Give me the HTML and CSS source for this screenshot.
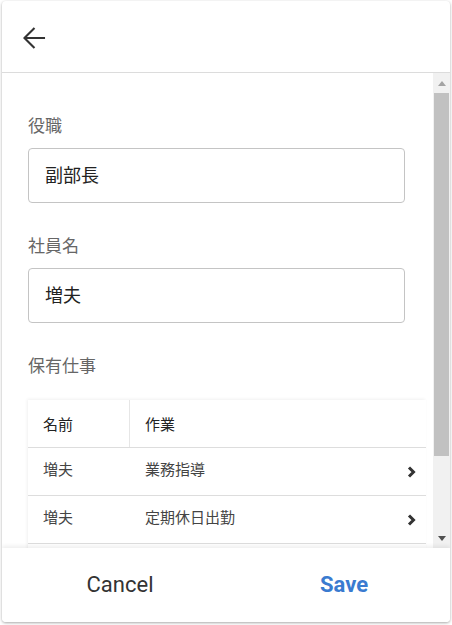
FILE: index.html
```html
<!DOCTYPE html>
<html lang="ja">
<head>
<meta charset="utf-8">
<link rel="stylesheet" href="styles.css">
</head>
<body>
<div class="card">
  <header class="top">
    <svg class="back" width="24" height="24" viewBox="0 0 24 24" aria-hidden="true">
      <path d="M1 11.5H23M12 1L1.5 11.5L12 22" fill="none" stroke="#333" stroke-width="2.2"/>
    </svg>
  </header>
  <div class="scroll">
    <div class="content">
      <div class="label">役職</div>
      <div class="input">副部長</div>
      <div class="label">社員名</div>
      <div class="input">増夫</div>
      <div class="label">保有仕事</div>
      <div class="table">
        <div class="row head">
          <div class="c1">名前</div>
          <div class="c2">作業</div>
        </div>
        <div class="row">
          <div class="c1">増夫</div>
          <div class="c2">業務指導</div>
          <svg class="chev" width="9" height="12" viewBox="0 0 9 12"><path d="M2 1.5L6.5 6L2 10.5" fill="none" stroke="#333" stroke-width="3"/></svg>
        </div>
        <div class="row">
          <div class="c1">増夫</div>
          <div class="c2">定期休日出勤</div>
          <svg class="chev" width="9" height="12" viewBox="0 0 9 12"><path d="M2 1.5L6.5 6L2 10.5" fill="none" stroke="#333" stroke-width="3"/></svg>
        </div>
        <div class="row"></div>
      </div>
    </div>
    <div class="sbar">
      <div class="arrow up"></div>
      <div class="thumb"></div>
      <div class="fill"></div>
      <div class="arrow down"></div>
    </div>
  </div>
  <footer class="foot">
    <div class="btn cancel">Cancel</div>
    <div class="btn save">Save</div>
  </footer>
</div>
</body>
</html>
```
FILE: styles.css
```css
html, body {
  margin: 0;
  padding: 0;
  background: #fff;
}
body {
  font-family: Roboto, "Noto Sans CJK JP", sans-serif;
  width: 452px;
  height: 625px;
  overflow: hidden;
}
.card {
  margin: 1px 2px 0 2px;
  height: 621px;
  background: #fff;
  border-radius: 4px;
  box-shadow: 0 1px 3px rgba(0,0,0,0.35);
  display: flex;
  flex-direction: column;
  overflow: hidden;
}
.top {
  flex: none;
  border-bottom: 1px solid #dcdcdc;
  display: flex;
  align-items: center;
  padding-left: 21px;
  box-sizing: border-box;
  height: 72px;
}
.back {
  width: 23px;
  height: 23px;
  margin-top: 4px;
}
.scroll {
  flex: 1;
  display: flex;
  min-height: 0;
  overflow: hidden;
}
.content {
  flex: 1;
  padding: 40px 7px 0 26px;
  overflow: hidden;
  font-family: "Noto Sans CJK JP", sans-serif;
}
.label {
  font-size: 17px;
  line-height: 24px;
  color: #666;
  margin-bottom: 11px;
}
.input {
  height: 55px;
  box-sizing: border-box;
  margin-right: 21px;
  border: 1px solid #c4c4c4;
  border-radius: 4px;
  padding: 0 0 3px 16px;
  display: flex;
  align-items: center;
  font-size: 18px;
  color: #222;
  margin-bottom: 30px;
}
.table {
  margin-top: 23px;
  box-shadow: -1px -1px 3px rgba(0,0,0,0.06);
  font-size: 15px;
  color: #444;
}
.row {
  display: flex;
  align-items: center;
  height: 47px;
  border-bottom: 1px solid #dddddd;
}
.row .c1, .row .c2 {
  padding-bottom: 6px;
}
.row.head {
  height: 47px;
  color: #222;
}
.row.head .c1, .row.head .c2 {
  padding-bottom: 1px;
}
.c1 {
  width: 102px;
  box-sizing: border-box;
  padding-left: 15px;
  height: 100%;
  display: flex;
  align-items: center;
}
.head .c1 {
  border-right: 1px solid #e6e6e6;
}
.c2 {
  flex: 1;
  padding-left: 15px;
  height: 100%;
  display: flex;
  align-items: center;
  box-sizing: border-box;
}
.chev {
  margin-right: 10px;
  margin-top: 1px;
}
.sbar {
  width: 17px;
  flex: none;
  background: #f1f1f1;
  display: flex;
  flex-direction: column;
  align-items: center;
}
.arrow {
  width: 0;
  height: 0;
  border-left: 4.5px solid transparent;
  border-right: 4.5px solid transparent;
  flex: none;
}
.arrow.up {
  border-bottom: 5px solid #a3a3a3;
  margin: 8px 0 7px;
}
.arrow.down {
  border-top: 5px solid #505050;
  margin: 7px 0 7px;
}
.thumb {
  width: 15px;
  height: 363px;
  background: #c1c1c1;
  flex: none;
}
.fill {
  flex: 1;
}
.foot {
  flex: none;
  height: 74px;
  display: flex;
  align-items: center;
  box-shadow: 0 -2px 4px rgba(0,0,0,0.07);
  position: relative;
  z-index: 1;
  background: #fff;
}
.btn {
  text-align: center;
  font-size: 22px;
  line-height: 30px;
  font-family: Roboto, sans-serif;
}
.cancel {
  width: 236px;
  color: #333;
}
.save {
  flex: 1;
  color: #3a7bd0;
  font-weight: bold;
}
```
